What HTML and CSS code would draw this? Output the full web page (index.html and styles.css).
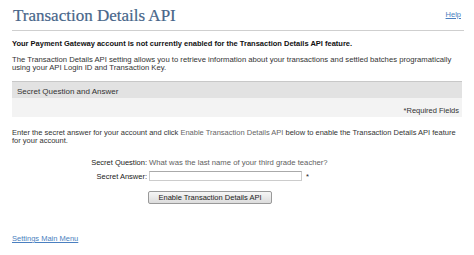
FILE: index.html
```html
<!DOCTYPE html>
<html>
<head>
<meta charset="utf-8">
<link rel="stylesheet" href="styles.css">
</head>
<body>
<div class="page">
  <div class="head">
    <h1 class="title">Transaction Details API</h1>
    <a class="help" href="#">Help</a>
  </div>
  <p class="warn">Your Payment Gateway account is not currently enabled for the Transaction Details API feature.</p>
  <p class="text desc">The Transaction Details API setting allows you to retrieve information about your transactions and settled batches programatically using your API Login ID and Transaction Key.</p>
  <div class="panel">
    <div class="panel-head">Secret Question and Answer</div>
    <div class="panel-sub">*Required Fields</div>
  </div>
  <p class="text intro">Enter the secret answer for your account and click <span class="hl">Enable Transaction Details API</span> below to enable the Transaction Details API feature for your account.</p>
  <div class="form">
    <div class="row">
      <span class="label">Secret Question:</span>
      <span class="question">What was the last name of your third grade teacher?</span>
    </div>
    <div class="row">
      <span class="label">Secret Answer:</span>
      <span class="input"></span>
      <span class="req">*</span>
    </div>
    <div class="row btnrow">
      <span class="label"></span>
      <button class="btn">Enable Transaction Details API</button>
    </div>
  </div>
  <a class="menu" href="#">Settings Main Menu</a>
</div>
</body>
</html>
```
FILE: styles.css
```css
* { box-sizing: border-box; }
html, body { margin: 0; padding: 0; background: #fff; }
body { font-family: "Liberation Sans", Arial, sans-serif; font-size: 7.5px; color: #222; }
.page { padding: 0 12px; width: 474px; }
.head { display: flex; justify-content: space-between; align-items: flex-end; border-bottom: 1px solid #cfcfcf; height: 31px; padding-bottom: 6px; width: 452px; }
.title { margin: 0; font-family: "Liberation Serif", "Times New Roman", serif; font-weight: normal; font-size: 17px; line-height: 17px; color: #48668a; padding-left: 1px; -webkit-text-stroke: 0.2px #48668a; }
.help { color: #4a7fc0; font-size: 7.5px; text-decoration: underline; margin-right: 3px; margin-bottom: 5px; }
.warn { margin: 8px 0 0; font-weight: bold; font-size: 7.5px; line-height: 9px; color: #111; }
.text { margin: 8px 0 0; font-size: 7.5px; line-height: 8px; color: #333; width: 450px; }
.desc { font-size: 7.7px; }
.panel { margin-top: 9px; width: 450px; }
.panel-head { background: #e2e2e2; border-top: 1px solid #c8c8c8; height: 17px; padding: 4px 5px 0; font-size: 8px; line-height: 11px; color: #333; }
.panel-sub { background: #f3f3f3; height: 19px; text-align: right; padding: 8px 3px 0; font-size: 7.5px; line-height: 9px; color: #333; }
.intro { margin-top: 12px; }
.hl { color: #666; }
.form { margin-top: 12px; display: flex; flex-direction: column; gap: 4px; }
.row { display: flex; align-items: center; height: 10px; }
.label { flex: none; width: 137px; text-align: right; padding-right: 2px; font-size: 7.5px; color: #222; }
.question { color: #5e5e5e; font-size: 7.7px; white-space: nowrap; }
.input { flex: none; width: 153px; height: 10px; border: 1px solid #ccc; border-top-color: #aaa; background: #fff; }
.req { margin-left: 4px; font-size: 7.5px; }
.btnrow { margin-top: 6px; height: 13px; }
.btn { flex: none; margin: 0; height: 13px; width: 124px; padding: 0; font-family: "Liberation Sans", Arial, sans-serif; font-size: 7.5px; color: #222; border: 1px solid #999; border-radius: 2px; background: linear-gradient(#f6f6f6, #dcdcdc); margin-left: -1px; }
.menu { display: inline-block; margin-top: 30px; color: #4a7fc0; font-size: 7.5px; text-decoration: underline; }
```
